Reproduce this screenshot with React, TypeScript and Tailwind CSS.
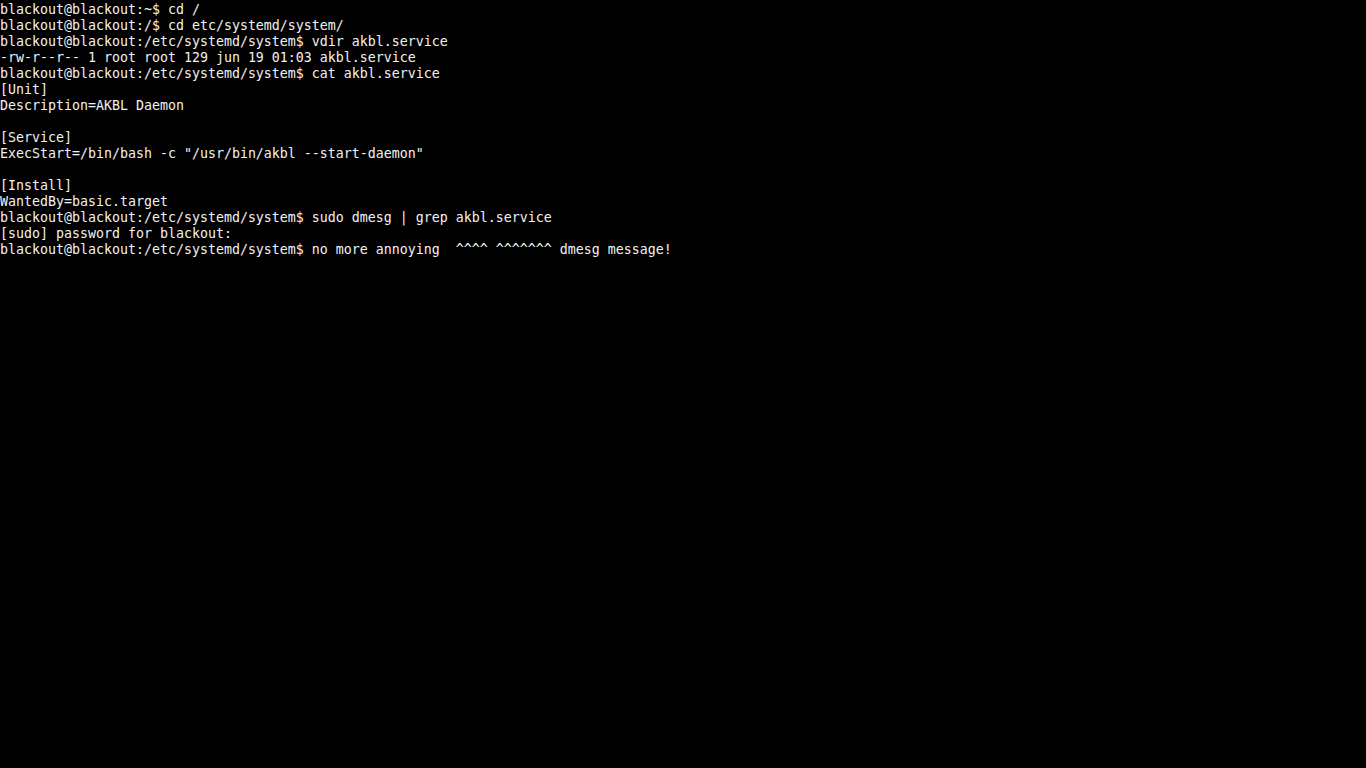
const lines = [
  'blackout@blackout:~$ cd /',
  'blackout@blackout:/$ cd etc/systemd/system/',
  'blackout@blackout:/etc/systemd/system$ vdir akbl.service',
  '-rw-r--r-- 1 root root 129 jun 19 01:03 akbl.service',
  'blackout@blackout:/etc/systemd/system$ cat akbl.service',
  '[Unit]',
  'Description=AKBL Daemon',
  '',
  '[Service]',
  'ExecStart=/bin/bash -c "/usr/bin/akbl --start-daemon"',
  '',
  '[Install]',
  'WantedBy=basic.target',
  'blackout@blackout:/etc/systemd/system$ sudo dmesg | grep akbl.service',
  '[sudo] password for blackout:',
  'blackout@blackout:/etc/systemd/system$ no more annoying  ^^^^ ^^^^^^^ dmesg message!',
];

export default function App() {
  return (
    <div className="w-[1366px] h-[768px] overflow-hidden bg-black pt-[2px] text-[#f2f2f2] font-['DejaVu_Sans_Mono','Liberation_Mono',monospace] text-[13.29px]">
      {lines.map((line, i) => (
        <div key={i} className="h-4 leading-4 whitespace-pre">
          {line}
        </div>
      ))}
    </div>
  );
}
